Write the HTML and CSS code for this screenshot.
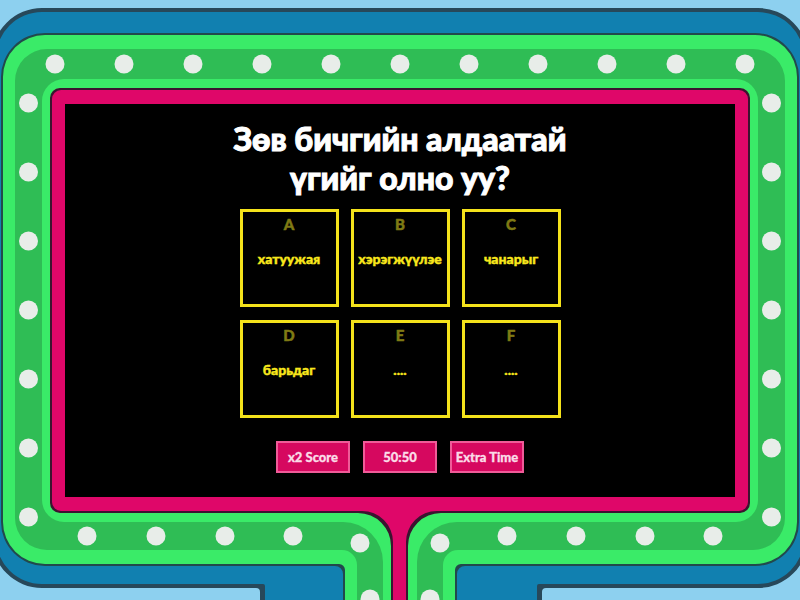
FILE: index.html
```html
<!DOCTYPE html>
<html lang="mn">
<head>
<meta charset="utf-8">
<title>Gameshow quiz</title>
<link rel="stylesheet" href="styles.css">
</head>
<body>
<div class="stage">
  <svg class="frame" width="800" height="600" viewBox="0 0 800 600" aria-hidden="true">
    <rect x="0" y="0" width="800" height="600" fill="#8dd0ef"/>
    <path fill="#27485a" d="M42 8 H758 A50 50 0 0 1 808 58 V538 A50 50 0 0 1 758 588 H546 A4 4 0 0 0 542 592 V620 H260 V592 A4 4 0 0 0 256 588 H42 A50 50 0 0 1 -8 538 V58 A50 50 0 0 1 42 8 Z"/>
    <path fill="#1180b0" d="M42 12 H758 A46 46 0 0 1 804 58 V538 A46 46 0 0 1 758 584 H539 A2 2 0 0 0 537 586 V620 H265 V586 A2 2 0 0 0 263 584 H42 A46 46 0 0 1 -4 538 V58 A46 46 0 0 1 42 12 Z"/>
    <path fill="#22494c" d="M45 33 H755 A44 44 0 0 1 799 77 V522 A44 44 0 0 1 755 566 H465 A8 8 0 0 0 457 574 V620 H343 V574 A8 8 0 0 0 335 566 H45 A44 44 0 0 1 1 522 V77 A44 44 0 0 1 45 33 Z"/>
    <path fill="#3aeb68" d="M45 35 H755 A42 42 0 0 1 797 77 V522 A42 42 0 0 1 755 564 H461 A6 6 0 0 0 455 570 V620 H345 V570 A6 6 0 0 0 339 564 H45 A42 42 0 0 1 3 522 V77 A42 42 0 0 1 45 35 Z"/>
    <path fill="#2fbd55" d="M47 49 H753 A32 32 0 0 1 785 81 V518 A32 32 0 0 1 753 550 H458 A15 15 0 0 0 443 565 V620 H357 V565 A15 15 0 0 0 342 550 H47 A32 32 0 0 1 15 518 V81 A32 32 0 0 1 47 49 Z"/>
    <path fill="#3aeb68" d="M64 79 H736 A22 22 0 0 1 758 101 V500 A22 22 0 0 1 736 522 H457 A40 40 0 0 0 417 562 V620 H383 V562 A40 40 0 0 0 343 522 H64 A22 22 0 0 1 42 500 V101 A22 22 0 0 1 64 79 Z"/>
    <path fill="#3b1430" d="M60 88 H740 A10 10 0 0 1 750 98 V503 A10 10 0 0 1 740 513 H441 A33 33 0 0 0 408 546 V620 H391 V546 A33 33 0 0 0 358 513 H60 A10 10 0 0 1 50 503 V98 A10 10 0 0 1 60 88 Z"/>
    <path fill="#df0769" d="M61 90 H739 A9 9 0 0 1 748 99 V502 A9 9 0 0 1 739 511 H437 A31 31 0 0 0 406 542 V620 H393 V542 A31 31 0 0 0 362 511 H61 A9 9 0 0 1 52 502 V99 A9 9 0 0 1 61 90 Z"/>
    <g fill="#e8ede9">
      <circle cx="55" cy="64" r="9.5"/><circle cx="124" cy="64" r="9.5"/><circle cx="193" cy="64" r="9.5"/>
      <circle cx="262" cy="64" r="9.5"/><circle cx="331" cy="64" r="9.5"/><circle cx="400" cy="64" r="9.5"/>
      <circle cx="469" cy="64" r="9.5"/><circle cx="538" cy="64" r="9.5"/><circle cx="607" cy="64" r="9.5"/>
      <circle cx="676" cy="64" r="9.5"/><circle cx="745" cy="64" r="9.5"/>
      <circle cx="28.5" cy="103" r="9.5"/><circle cx="28.5" cy="172" r="9.5"/><circle cx="28.5" cy="241" r="9.5"/>
      <circle cx="28.5" cy="310" r="9.5"/><circle cx="28.5" cy="379" r="9.5"/><circle cx="28.5" cy="448" r="9.5"/>
      <circle cx="28.5" cy="517" r="9.5"/>
      <circle cx="771.5" cy="103" r="9.5"/><circle cx="771.5" cy="172" r="9.5"/><circle cx="771.5" cy="241" r="9.5"/>
      <circle cx="771.5" cy="310" r="9.5"/><circle cx="771.5" cy="379" r="9.5"/><circle cx="771.5" cy="448" r="9.5"/>
      <circle cx="771.5" cy="517" r="9.5"/>
      <circle cx="87" cy="536" r="9.5"/><circle cx="156" cy="536" r="9.5"/><circle cx="225" cy="536" r="9.5"/>
      <circle cx="293" cy="536" r="9.5"/><circle cx="360" cy="543" r="9.5"/>
      <circle cx="440" cy="543" r="9.5"/><circle cx="507" cy="536" r="9.5"/><circle cx="576" cy="536" r="9.5"/>
      <circle cx="645" cy="536" r="9.5"/><circle cx="713" cy="536" r="9.5"/>
      <circle cx="370" cy="599" r="9.5"/><circle cx="430" cy="599" r="9.5"/>
    </g>
  </svg>

  <main class="screen">
    <h1 class="question">Зөв бичгийн алдаатай<br>үгийг олно уу?</h1>
    <div class="answers">
      <div class="card"><span class="letter">A</span><span class="answer">хатуужая</span></div>
      <div class="card"><span class="letter">B</span><span class="answer">хэрэгжүүлэе</span></div>
      <div class="card"><span class="letter">C</span><span class="answer">чанарыг</span></div>
      <div class="card"><span class="letter">D</span><span class="answer">барьдаг</span></div>
      <div class="card"><span class="letter">E</span><span class="answer">....</span></div>
      <div class="card"><span class="letter">F</span><span class="answer">....</span></div>
    </div>
    <div class="powerups">
      <button class="power" type="button">x2 Score</button>
      <button class="power" type="button">50:50</button>
      <button class="power" type="button">Extra Time</button>
    </div>
  </main>
</div>
</body>
</html>
```

FILE: styles.css
```css
html, body {
  margin: 0;
  padding: 0;
  background: #8dd0ef;
}

.stage {
  position: relative;
  width: 800px;
  height: 600px;
  overflow: hidden;
  padding-top: 104px;
  box-sizing: border-box;
  font-family: Lato, Roboto, "Noto Sans", sans-serif;
}

.frame {
  position: absolute;
  left: 0;
  top: 0;
  display: block;
}

.screen {
  position: relative;
  margin-left: 65px;
  width: 670px;
  height: 393px;
  background: #000;
  display: flex;
  flex-direction: column;
  align-items: center;
}

.question {
  margin: 15px 0 0;
  color: #ffffff;
  font-size: 32px;
  line-height: 39px;
  font-weight: 900;
  text-align: center;
  -webkit-text-stroke: 1px #ffffff;
}

.answers {
  margin-top: 12px;
  display: grid;
  grid-template-columns: repeat(3, 99px);
  grid-auto-rows: 98px;
  column-gap: 12px;
  row-gap: 13px;
}

.card {
  box-sizing: border-box;
  border: 3px solid #f4e21b;
  display: flex;
  flex-direction: column;
  align-items: center;
}

.letter {
  margin-top: 4px;
  font-size: 15px;
  line-height: 16px;
  font-weight: 900;
  color: #7f7a14;
  -webkit-text-stroke: 0.5px #7f7a14;
}

.answer {
  margin-top: 19px;
  font-size: 14px;
  line-height: 16px;
  font-weight: 900;
  color: #f8e71c;
  white-space: nowrap;
  -webkit-text-stroke: 0.4px #f8e71c;
}

.powerups {
  margin-top: 23px;
  display: flex;
  gap: 13px;
}

.power {
  box-sizing: border-box;
  width: 74px;
  height: 32px;
  padding: 0;
  background: #d6085f;
  border: 2px solid #ef5b98;
  color: #fbdbe7;
  font-family: Lato, Roboto, "Noto Sans", sans-serif;
  font-size: 13px;
  font-weight: 900;
  -webkit-text-stroke: 0.3px #fbdbe7;
}
```
